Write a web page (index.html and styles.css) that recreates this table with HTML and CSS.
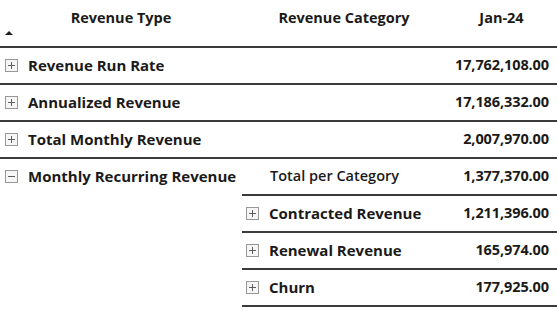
FILE: index.html
```html
<!DOCTYPE html>
<html>
<head>
<meta charset="utf-8">
<link rel="stylesheet" href="styles.css">
</head>
<body>
<table class="matrix">
  <colgroup>
    <col class="c1"><col class="c2"><col class="c3">
  </colgroup>
  <thead>
    <tr>
      <th class="h1"><span class="label">Revenue Type</span><span class="sort"></span></th>
      <th>Revenue Category</th>
      <th>Jan-24</th>
    </tr>
  </thead>
  <tbody>
    <tr class="full">
      <td class="name"><span class="exp plus"></span>Revenue Run Rate</td>
      <td></td>
      <td class="num">17,762,108.00</td>
    </tr>
    <tr class="full">
      <td class="name"><span class="exp plus"></span>Annualized Revenue</td>
      <td></td>
      <td class="num">17,186,332.00</td>
    </tr>
    <tr class="full">
      <td class="name"><span class="exp plus"></span>Total Monthly Revenue</td>
      <td></td>
      <td class="num">2,007,970.00</td>
    </tr>
    <tr class="sub">
      <td class="name open" rowspan="4"><span class="exp minus"></span>Monthly Recurring Revenue</td>
      <td class="cat total">Total per Category</td>
      <td class="num">1,377,370.00</td>
    </tr>
    <tr class="sub">
      <td class="cat"><span class="exp plus"></span>Contracted Revenue</td>
      <td class="num">1,211,396.00</td>
    </tr>
    <tr class="sub">
      <td class="cat"><span class="exp plus"></span>Renewal Revenue</td>
      <td class="num">165,974.00</td>
    </tr>
    <tr class="sub">
      <td class="cat"><span class="exp plus"></span>Churn</td>
      <td class="num">177,925.00</td>
    </tr>
  </tbody>
</table>
</body>
</html>
```
FILE: styles.css
```css
* { box-sizing: border-box; }
html, body { margin: 0; padding: 0; background: #fff; }
body {
  font-family: "Open Sans", "Noto Sans", sans-serif;
  font-weight: 700;
  font-size: 15px;
  color: #1b1a19;
}
.matrix {
  border-collapse: collapse;
  width: 557px;
  table-layout: fixed;
}
.c1 { width: 242px; }
.c2 { width: 204px; }
.c3 { width: 111px; }
th {
  height: 47px;
  padding: 0;
  padding-bottom: 11px;
  font-weight: 700;
  font-size: 14.5px;
  text-align: center;
  vertical-align: middle;
  border-bottom: 2px solid #3b3a39;
  position: relative;
}
.sort {
  position: absolute;
  left: 5px;
  top: 31px;
  width: 0; height: 0;
  border-left: 4px solid transparent;
  border-right: 4px solid transparent;
  border-bottom: 4px solid #201f1e;
}
td {
  height: 37px;
  padding: 0;
  vertical-align: middle;
  white-space: nowrap;
}
tr.full td { border-bottom: 2px solid #3b3a39; }
tr.sub td.cat, tr.sub td.num { border-bottom: 2px solid #3b3a39; }
td.name { padding-left: 5px; padding-bottom: 2px; }
td.name.open { vertical-align: top; padding-top: 7px; border-bottom: none; }
td.cat { padding-left: 4px; padding-bottom: 2px; }
td.cat.total { padding-left: 28px; font-weight: 600; font-size: 14.5px; }
td.num {
  text-align: right;
  padding-right: 8px;
  padding-bottom: 2px;
  font-size: 14.5px;
  letter-spacing: -0.1px;
}
.exp {
  display: inline-block;
  width: 13px; height: 13px;
  border: 1px solid #9a9896;
  background: #f6f6f6;
  position: relative;
  margin-right: 10px;
  vertical-align: -1px;
}
.exp::before {
  content: "";
  position: absolute;
  left: 2px; top: 5px;
  width: 7px; height: 1px;
  background: #605e5c;
}
.exp.plus::after {
  content: "";
  position: absolute;
  left: 5px; top: 2px;
  width: 1px; height: 7px;
  background: #605e5c;
}
```
